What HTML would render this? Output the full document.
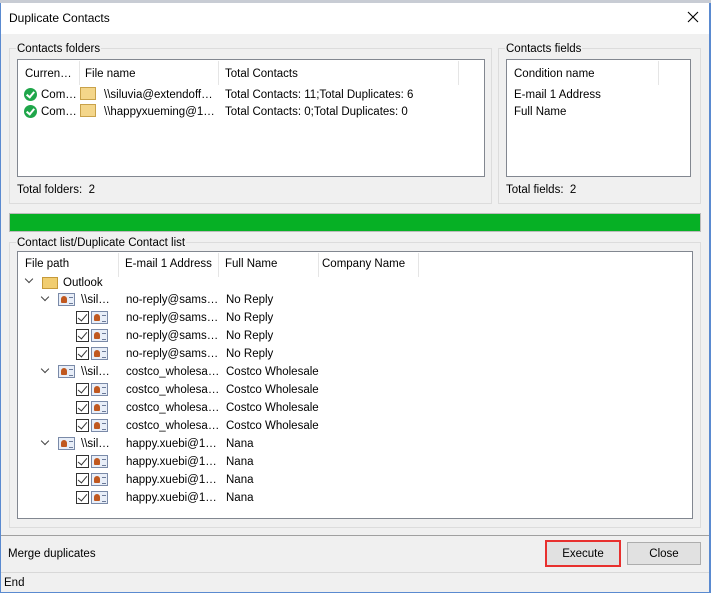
<!DOCTYPE html>
<html><head><style>
*{margin:0;padding:0;box-sizing:border-box}
body{width:711px;height:593px;overflow:hidden;background:#f0f0f0;font-family:"Liberation Sans",sans-serif;font-size:11.5px;color:#000;position:relative}
.a{position:absolute;white-space:nowrap}
.grp{position:absolute;border:1px solid #dcdcdc}
.leg{position:absolute;background:#f0f0f0;padding:0 1px;top:-7px;left:6px;line-height:14px}
.box{position:absolute;background:#fff;border:1px solid #828790}
.sep{position:absolute;width:1px;background:#e5e5e5;top:1px;height:24px}
.chk{position:absolute;width:13px;height:13px;border:1px solid #333;background:#fff}
.chk:after{content:"";position:absolute;left:3px;top:0px;width:4px;height:8px;border:solid #333;border-width:0 1.5px 1.5px 0;transform:rotate(40deg)}
.card{position:absolute;width:17px;height:13px;border:1px solid #7a8aa8;background:#e8eef8}
.card:before{content:"";position:absolute;left:2px;top:2px;width:6px;height:7px;background:#c0581f;border-radius:3px 3px 1px 1px}
.card:after{content:"";position:absolute;left:10px;top:3px;width:4px;height:5px;border-top:1px solid #6b7a99;border-bottom:1px solid #6b7a99}
.arr{position:absolute;width:6px;height:6px;border:solid #444;border-width:0 1.5px 1.5px 0;transform:rotate(45deg)}
.ok{position:absolute;width:13px;height:13px;border-radius:50%;background:#1fa64a}
.ok:after{content:"";position:absolute;left:4px;top:2px;width:3px;height:6px;border:solid #fff;border-width:0 2px 2px 0;transform:rotate(40deg)}
.env{position:absolute;width:16px;height:13px;background:#f4d68a;border:1px solid #c9a24a}
.btn{position:absolute;background:#e1e1e1;border:1px solid #adadad;text-align:center;line-height:22px}
</style></head><body>
<div class="a" style="left:0;top:0;width:711px;height:3px;background:#c8ccd4"></div>
<div class="a" style="left:0;top:3px;width:711px;height:31px;background:#fff"></div>
<div class="a" style="left:9px;top:11px;font-size:12px">Duplicate Contacts</div>
<svg class="a" style="left:687px;top:11px" width="12" height="12"><path d="M1 1L11 11M11 1L1 11" stroke="#000" stroke-width="1.1"/></svg>
<div class="a" style="left:0;top:3px;width:1px;height:590px;background:#5a8ad0"></div>
<div class="a" style="left:709px;top:3px;width:2px;height:590px;background:#5a8ad0"></div>

<div class="grp" style="left:9px;top:48px;width:483px;height:156px"><div class="leg">Contacts folders</div></div>
<div class="box" style="left:17px;top:59px;width:468px;height:118px">
 <div class="sep" style="left:61px"></div><div class="sep" style="left:200px"></div><div class="sep" style="left:440px"></div>
 <div class="a" style="left:7px;top:8px">Curren…</div><div class="a" style="left:67px;top:8px">File name</div><div class="a" style="left:207px;top:8px">Total Contacts</div>
 <div class="ok" style="left:6px;top:28px"></div><div class="a" style="left:23px;top:29px">Com…</div><div class="env" style="left:62px;top:27px"></div><div class="a" style="left:86px;top:29px">\\siluvia@extendoff…</div><div class="a" style="left:207px;top:29px">Total Contacts: 11;Total Duplicates: 6</div>
 <div class="ok" style="left:6px;top:45px"></div><div class="a" style="left:23px;top:46px">Com…</div><div class="env" style="left:62px;top:44px"></div><div class="a" style="left:86px;top:46px">\\happyxueming@1…</div><div class="a" style="left:207px;top:46px">Total Contacts: 0;Total Duplicates: 0</div>
</div>
<div class="a" style="left:17px;top:184px">Total folders:&nbsp; 2</div>

<div class="grp" style="left:498px;top:48px;width:203px;height:156px"><div class="leg">Contacts fields</div></div>
<div class="box" style="left:506px;top:59px;width:185px;height:118px">
 <div class="sep" style="left:151px"></div>
 <div class="a" style="left:7px;top:8px">Condition name</div>
 <div class="a" style="left:7px;top:29px">E-mail 1 Address</div>
 <div class="a" style="left:7px;top:46px">Full Name</div>
</div>
<div class="a" style="left:506px;top:184px">Total fields:&nbsp; 2</div>

<div class="a" style="left:9px;top:213px;width:692px;height:19px;background:#06b025;border:1px solid #bcbcbc"></div>

<div class="grp" style="left:9px;top:242px;width:692px;height:286px"><div class="leg">Contact list/Duplicate Contact list</div></div>
<div class="box" style="left:17px;top:251px;width:676px;height:268px">
 <div class="sep" style="left:100px"></div><div class="sep" style="left:200px"></div><div class="sep" style="left:300px"></div><div class="sep" style="left:400px"></div>
 <div class="a" style="left:7px;top:6px">File path</div><div class="a" style="left:107px;top:6px">E-mail 1 Address</div><div class="a" style="left:207px;top:6px">Full Name</div><div class="a" style="left:304px;top:6px">Company Name</div>
 <div class="arr" style="left:8px;top:24px"></div>
 <div class="a" style="left:24px;top:25px;width:16px;height:12px;background:#f1cd70;border:1px solid #c69a3a"></div>
 <div class="a" style="left:45px;top:25px">Outlook</div>
</div>
<div id="rows"></div>
<script>
var rows=[["p","no-reply@sams…","No Reply"],["c","no-reply@sams…","No Reply"],["c","no-reply@sams…","No Reply"],["c","no-reply@sams…","No Reply"],
["p","costco_wholesa…","Costco Wholesale"],["c","costco_wholesa…","Costco Wholesale"],["c","costco_wholesa…","Costco Wholesale"],["c","costco_wholesa…","Costco Wholesale"],
["p","happy.xuebi@1…","Nana"],["c","happy.xuebi@1…","Nana"],["c","happy.xuebi@1…","Nana"],["c","happy.xuebi@1…","Nana"]];
var h="";rows.forEach(function(r,i){var y=293+i*18;
if(r[0]=="p"){h+='<div class="arr" style="left:42px;top:'+(y+1)+'px"></div><div class="card" style="left:58px;top:'+y+'px"></div><div class="a" style="left:81px;top:'+(y+1)+'px">\\\\sil…</div>';}
else{h+='<div class="chk" style="left:76px;top:'+y+'px"></div><div class="card" style="left:91px;top:'+y+'px"></div>';}
h+='<div class="a" style="left:126px;top:'+(y+1)+'px">'+r[1]+'</div><div class="a" style="left:226px;top:'+(y+1)+'px">'+r[2]+'</div>';});
document.getElementById("rows").innerHTML=h;
</script>

<div class="a" style="left:1px;top:535px;width:708px;height:1px;background:#a0a0a0"></div>
<div class="a" style="left:8px;top:548px">Merge duplicates</div>
<div class="btn" style="left:545px;top:540px;width:76px;height:27px;border:2px solid #e8302e;line-height:25px">Execute</div>
<div class="btn" style="left:627px;top:542px;width:74px;height:23px">Close</div>
<div class="a" style="left:1px;top:572px;width:708px;height:1px;background:#d8d8d8"></div>
<div class="a" style="left:4px;top:577px">End</div>
<div class="a" style="left:0;top:592px;width:711px;height:1px;background:#5a8ad0"></div>
</body></html>
